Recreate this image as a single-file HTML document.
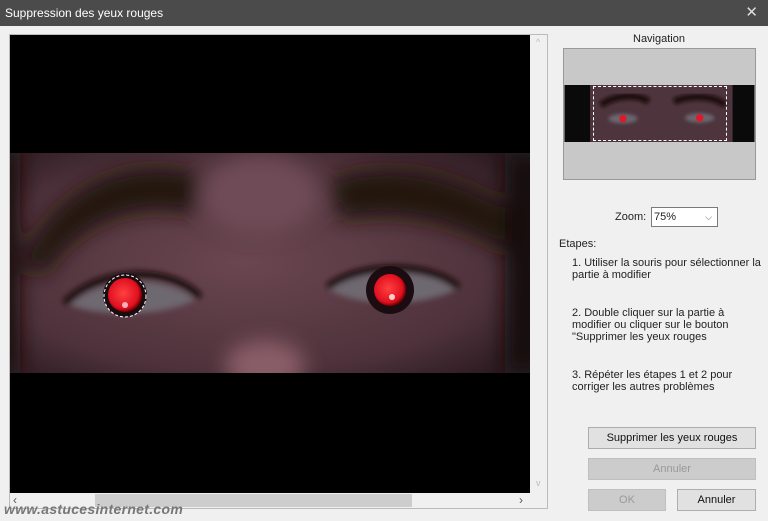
<!DOCTYPE html>
<html><head><meta charset="utf-8"><style>
*{margin:0;padding:0;box-sizing:border-box}
body{width:768px;height:521px;background:#f0f0f0;font-family:"Liberation Sans",sans-serif;font-size:11px;color:#222;position:relative;overflow:hidden}
.abs{position:absolute}
.title{left:0;top:0;width:768px;height:26px;background:#4b4b4b;color:#fff;font-size:12px;line-height:26px;padding-left:5px}
.btn{position:absolute;background:#e1e1e1;border:1px solid #adadad;text-align:center;font-size:11px;line-height:20px;color:#111}
.dis{background:#ccc;border-color:#bfbfbf;color:#999}
.t{position:absolute;font-size:11px;line-height:12px;color:#222}
</style></head><body>
<div class="abs title">Suppression des yeux rouges<span style="position:absolute;right:10px;top:0;font-size:15px;font-weight:300;color:#ddd">✕</span></div>
<div class="abs" style="left:9px;top:34px;width:539px;height:475px;border:1px solid #bbb;background:#f0f0f0"></div>
<svg class="abs" style="left:10px;top:35px" width="520" height="458" viewBox="0 0 520 458">
<defs>
<filter id="b" x="-50%" y="-50%" width="200%" height="200%"><feGaussianBlur stdDeviation="10"/></filter>
<filter id="b2" x="-50%" y="-50%" width="200%" height="200%"><feGaussianBlur stdDeviation="3"/></filter>
<radialGradient id="face" cx="0.45" cy="0.5" r="0.7"><stop offset="0" stop-color="#6a4650"/><stop offset="0.7" stop-color="#4e323b"/><stop offset="1" stop-color="#2a1a1f"/></radialGradient>
<radialGradient id="red" cx="0.45" cy="0.45" r="0.55"><stop offset="0" stop-color="#ff4040"/><stop offset="0.8" stop-color="#e01020"/><stop offset="1" stop-color="#700"/></radialGradient>
<clipPath id="c"><rect y="118" width="520" height="220"/></clipPath>
</defs>
<rect width="520" height="458" fill="#000"/>
<rect y="118" width="520" height="220" fill="url(#face)"/>
<g clip-path="url(#c)">
<g filter="url(#b)">
<path d="M10 230 C50 140 130 120 190 140 L185 180 C130 165 70 185 35 240Z" fill="#24120f"/>
<path d="M320 145 C380 120 460 140 515 185 L505 225 C450 185 390 175 330 185Z" fill="#24120f"/>
<ellipse cx="250" cy="160" rx="60" ry="40" fill="#6e4c56"/>
<ellipse cx="255" cy="330" rx="40" ry="25" fill="#8a5d68"/>
<rect x="495" y="118" width="40" height="220" fill="#120809"/>
<rect x="-20" y="118" width="30" height="220" fill="#1a0d10"/>
</g>
<g filter="url(#b2)">
<path d="M60 270 C90 240 160 240 185 265 C150 282 90 282 60 270Z" fill="#6e6870"/>
<path d="M320 255 C350 232 420 232 445 255 C410 272 350 272 320 255Z" fill="#6e6870"/>
<path d="M55 268 C90 232 160 230 190 262" stroke="#1a0c0e" stroke-width="7" fill="none"/>
<path d="M318 252 C350 227 420 227 448 252" stroke="#1a0c0e" stroke-width="7" fill="none"/>
</g>
</g>
<circle cx="115" cy="260" r="22" fill="#1a0c10"/>
<circle cx="380" cy="255" r="24" fill="#1a0c10"/>
<circle cx="115" cy="260" r="17" fill="url(#red)"/>
<circle cx="380" cy="255" r="16" fill="url(#red)"/>
<circle cx="115" cy="270" r="3" fill="#ffb0c0"/>
<circle cx="382" cy="262" r="3" fill="#ffd0d0"/>
<circle cx="115" cy="261" r="21" fill="none" stroke="#fff" stroke-dasharray="3,2" stroke-width="1"/>
</svg>
<div class="abs" style="left:10px;top:493px;width:520px;height:15px;background:#f0f0f0"></div>
<div class="abs" style="left:95px;top:494px;width:317px;height:13px;background:#cdcdcd"></div>
<div class="abs" style="left:13px;top:493px;font-size:12px;color:#555">‹</div>
<div class="abs" style="left:519px;top:493px;font-size:12px;color:#555">›</div>
<div class="abs" style="left:536px;top:37px;font-size:9px;color:#bbb">^</div>
<div class="abs" style="left:536px;top:478px;font-size:9px;color:#bbb">v</div>
<div class="abs" style="left:4px;top:501px;font-size:14px;font-style:italic;font-weight:bold;color:#777;letter-spacing:0.3px">www.astucesinternet.com</div>

<div class="t" style="left:633px;top:33px">Navigation</div>
<div class="abs" style="left:563px;top:48px;width:193px;height:132px;background:#c8c8c8;border:1px solid #999"></div>
<svg class="abs" style="left:564px;top:85px" width="191" height="57" viewBox="0 0 520 156">
<defs><filter id="nb"><feGaussianBlur stdDeviation="5"/></filter></defs>
<rect width="520" height="156" fill="#0a0a0a"/>
<rect x="70" y="0" width="390" height="156" fill="#4e343d"/>
<g filter="url(#nb)">
<path d="M100 55 C140 25 200 25 230 45" stroke="#1e0e0e" stroke-width="18" fill="none"/>
<path d="M300 45 C350 25 410 30 440 55" stroke="#1e0e0e" stroke-width="18" fill="none"/>
<ellipse cx="160" cy="92" rx="40" ry="13" fill="#6a6670"/>
<ellipse cx="370" cy="90" rx="40" ry="13" fill="#6a6670"/>
</g>
<circle cx="160" cy="92" r="10" fill="#e01828"/>
<circle cx="370" cy="90" r="10" fill="#e01828"/>
</svg>
<div class="abs" style="left:593px;top:86px;width:134px;height:55px;border:1px dashed #fff"></div>
<div class="t" style="left:615px;top:211px">Zoom:</div>
<div class="abs" style="left:651px;top:207px;width:67px;height:20px;background:#fff;border:1px solid #7a7a7a;font-size:11px;line-height:18px;padding-left:2px">75%<span style="position:absolute;right:5px;top:0;font-size:9px;color:#555">⌵</span></div>
<div class="t" style="left:559px;top:238px">Etapes:</div>
<div class="t" style="left:572px;top:257px">1. Utiliser la souris pour sélectionner la<br>partie à modifier</div>
<div class="t" style="left:572px;top:307px">2. Double cliquer sur la partie à<br>modifier ou cliquer sur le bouton<br>"Supprimer les yeux rouges</div>
<div class="t" style="left:572px;top:369px">3. Répéter les étapes 1 et 2 pour<br>corriger les autres problèmes</div>
<div class="btn" style="left:588px;top:427px;width:168px;height:22px">Supprimer les yeux rouges</div>
<div class="btn dis" style="left:588px;top:458px;width:168px;height:22px">Annuler</div>
<div class="btn dis" style="left:588px;top:489px;width:78px;height:22px">OK</div>
<div class="btn" style="left:677px;top:489px;width:79px;height:22px">Annuler</div>
</body></html>
